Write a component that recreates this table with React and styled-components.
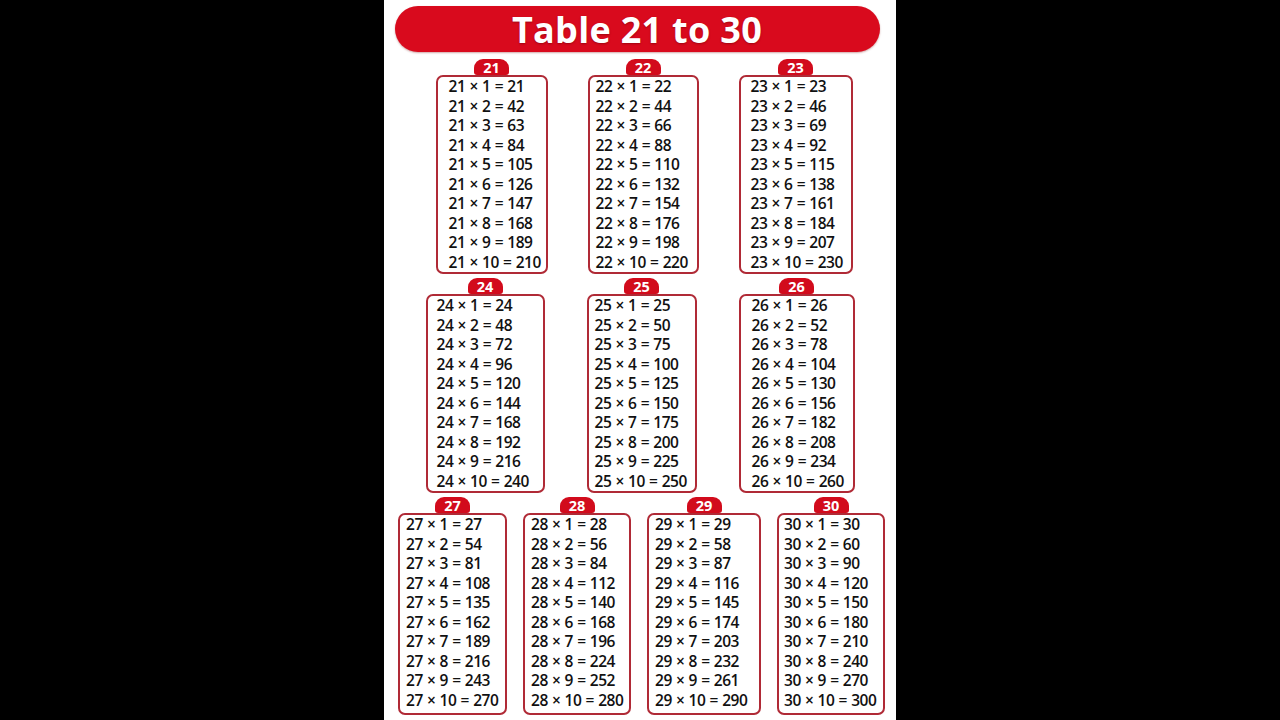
import React from "react";
import styled, { createGlobalStyle } from "styled-components";

const Global = createGlobalStyle`
  html, body { margin: 0; padding: 0; background: #000; }
  body { width: 1280px; height: 720px; overflow: hidden; }
`;

const Stage = styled.div`
  width: 1280px;
  height: 720px;
  background: #000;
  display: flex;
  justify-content: center;
`;

const Sheet = styled.main`
  width: 512px;
  height: 720px;
  background: #fff;
  display: flex;
  flex-direction: column;
  align-items: center;
  padding-top: 6px;
  box-sizing: border-box;
  font-family: "Open Sans", "Noto Sans", sans-serif;
`;

const Title = styled.h1`
  margin: 0 0 0 -6px;
  width: 485px;
  height: 46px;
  border-radius: 23px;
  background: #d90a1d;
  box-shadow: 0 1px 2px rgba(120, 0, 0, 0.35);
  color: #fff;
  font-family: "Open Sans", "Noto Sans", sans-serif;
  font-weight: 700;
  font-size: 36px;
  line-height: 47px;
  text-align: center;
  letter-spacing: 0.3px;
  text-shadow: 0 1px 2px rgba(90, 0, 0, 0.45);
`;

const Rows = styled.div`
  display: flex;
  flex-direction: column;
  gap: 4px;
  margin-top: 7px;
  width: 100%;
`;

const Row = styled.div`
  display: flex;
  justify-content: center;
  align-items: flex-start;
  gap: ${(p) => p.$gap}px;
  padding-left: ${(p) => p.$shift || 0}px;
`;

const Block = styled.section`
  display: flex;
  flex-direction: column;
  align-items: center;
`;

const Badge = styled.div`
  min-width: 35px;
  height: 16px;
  padding: 0 2px;
  box-sizing: border-box;
  border-radius: 9px 9px 3px 3px;
  background: #d20b1c;
  color: #fff;
  font-weight: 700;
  font-size: 14.5px;
  line-height: 17px;
  text-align: center;
`;

const Box = styled.div`
  width: ${(p) => p.$w}px;
  box-sizing: border-box;
  border: 2px solid #b02a36;
  border-radius: 7px;
  padding: 0 0 ${(p) => p.$pb || 0}px ${(p) => p.$pl}px;
  display: flex;
  flex-direction: column;
`;

const Line = styled.div`
  font-size: 15.5px;
  font-weight: 600;
  line-height: 19.5px;
  color: #111;
  white-space: nowrap;
  letter-spacing: -0.45px;
  word-spacing: 0.6px;
`;

const rows = [
  { gap: 40, shift: 8, pb: 0, tables: [[21, 112, 11], [22, 111, 6], [23, 114, 10]] },
  { gap: 42, shift: 0, pb: 0, tables: [[24, 119, 9], [25, 110, 6], [26, 116, 11]] },
  { gap: 16, shift: 3, pb: 3, tables: [[27, 109, 6], [28, 108, 6], [29, 114, 6], [30, 108, 5]] },
];

function Table({ n, w, pl, pb }) {
  return (
    <Block>
      <Badge>{n}</Badge>
      <Box $w={w} $pl={pl} $pb={pb}>
        {Array.from({ length: 10 }, (_, i) => (
          <Line key={i}>
            {n} × {i + 1} = {n * (i + 1)}
          </Line>
        ))}
      </Box>
    </Block>
  );
}

export default function App() {
  return (
    <>
      <Global />
      <Stage>
        <Sheet>
          <Title>Table 21 to 30</Title>
          <Rows>
            {rows.map((r, i) => (
              <Row key={i} $gap={r.gap} $shift={r.shift}>
                {r.tables.map(([n, w, pl]) => (
                  <Table key={n} n={n} w={w} pl={pl} pb={r.pb} />
                ))}
              </Row>
            ))}
          </Rows>
        </Sheet>
      </Stage>
    </>
  );
}
